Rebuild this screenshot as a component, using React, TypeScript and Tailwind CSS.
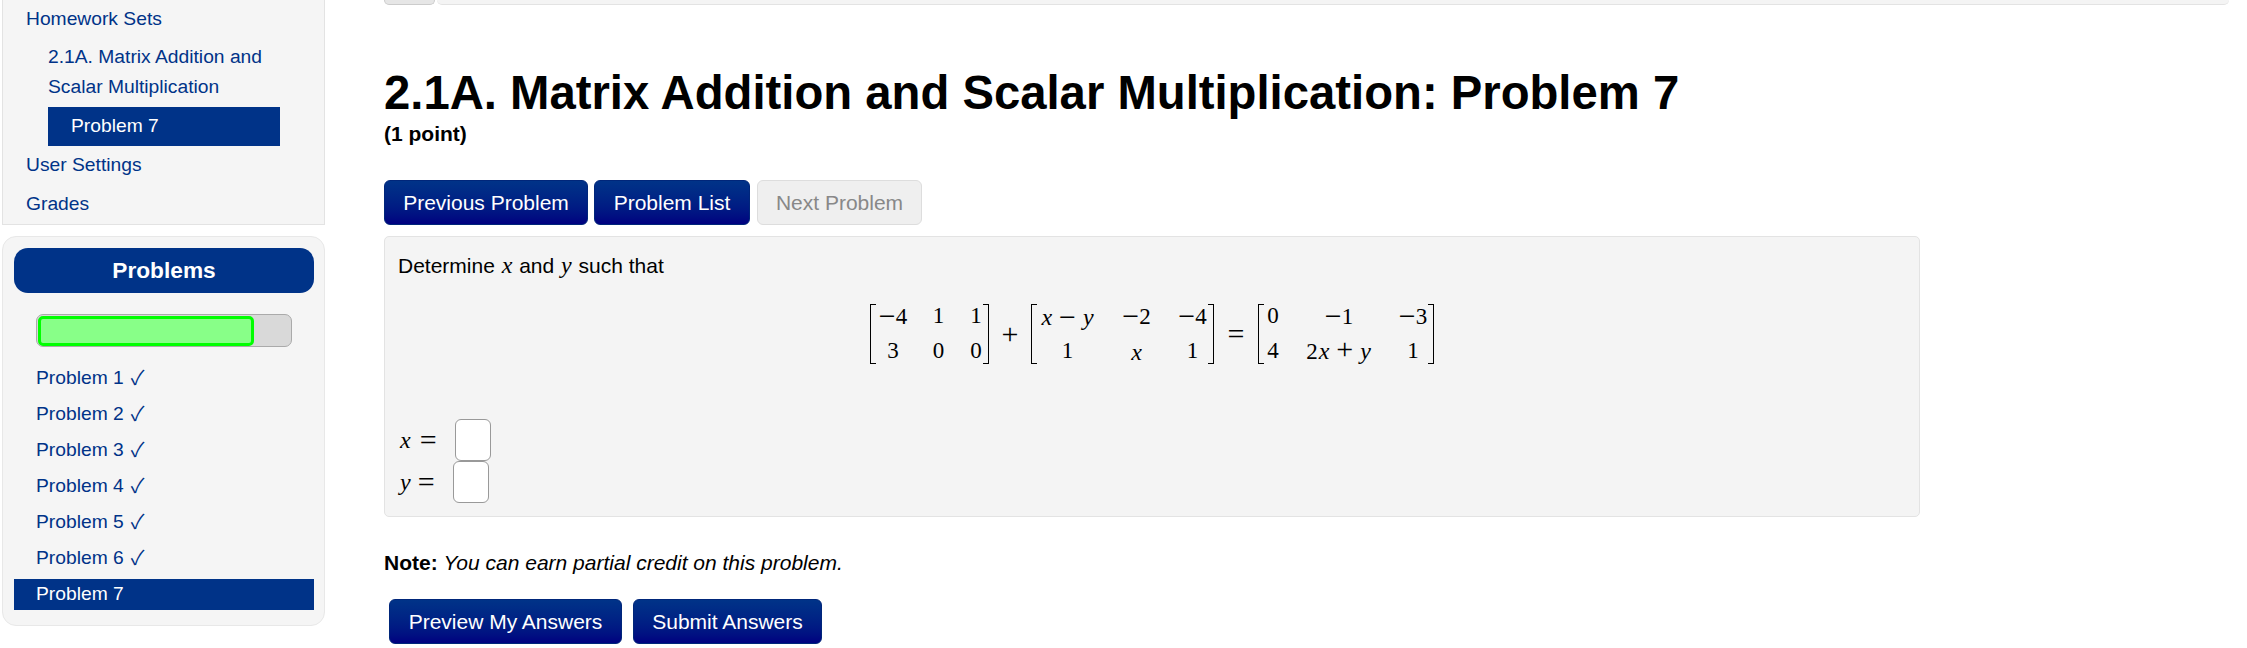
/** WeBWorK problem page: sidebar nav + problem body */

const blueBtn =
  "h-[45px] rounded-[6px] border border-[#00267a] bg-gradient-to-b from-[#003388] to-[#000080] text-[21px] text-white";

function Bracket({ side }: { side: "l" | "r" }) {
  return (
    <div
      className={
        side === "l"
          ? "h-[60px] w-[6px] shrink-0 border-y border-l-[1.5px] border-black"
          : "h-[60px] w-[6px] shrink-0 border-y border-r-[1.5px] border-black"
      }
    />
  );
}

function Matrix({ cols, cells, className }: { cols: string; cells: React.ReactNode[]; className: string }) {
  return (
    <div className={"flex items-center justify-between " + className}>
      <Bracket side="l" />
      <div className={"ml-[2px] grid auto-rows-[35px] items-center text-center " + cols}>
        {cells.map((cell, i) => (
          <div key={i} className="flex items-baseline justify-center whitespace-nowrap">
            {cell}
          </div>
        ))}
      </div>
      <Bracket side="r" />
    </div>
  );
}

function V({ children }: { children: React.ReactNode }) {
  return <i className="px-[1px] font-['Liberation_Serif',serif] text-[24px]">{children}</i>;
}

/** math operator, set larger than the digits to get the width of the reference's math font */
function Op({ children, className = "" }: { children: React.ReactNode; className?: string }) {
  return <span className={"font-['Liberation_Serif',serif] text-[30px] leading-none " + className}>{children}</span>;
}

function Minus({ className = "" }: { className?: string }) {
  return <Op className={"translate-y-[1.5px] " + className}>−</Op>;
}

export default function App() {
  const problems = [1, 2, 3, 4, 5, 6];

  return (
    <div className="flex h-[648px] w-[2247px] overflow-hidden bg-white font-['Liberation_Sans',Arial,sans-serif] text-[21px] text-black">
      {/* left column */}
      <aside className="ml-[2px] w-[323px] shrink-0 text-[19.25px]">
        <nav className="h-[225px] border-x border-b border-[#e3e3e3] bg-[#f5f5f5] text-[#003388]">
          <div className="flex h-[38px] items-center pl-[23px]">Homework Sets</div>
          <div className="ml-[45px] pt-[4px] leading-[30px]">
            2.1A. Matrix Addition and
            <br />
            Scalar Multiplication
          </div>
          <div className="ml-[45px] mt-[5px] flex h-[39px] w-[232px] items-center bg-[#003388] pl-[23px] text-white">
            Problem 7
          </div>
          <div className="flex h-[39px] items-center pl-[23px]">User Settings</div>
          <div className="flex h-[39px] items-center pl-[23px]">Grades</div>
        </nav>

        <section className="mt-[11px] h-[390px] rounded-[14px] border border-[#e8e8e8] bg-[#f5f5f5] px-[11px] pt-[11px] text-[#003388]">
          <h2 className="flex h-[45px] w-[300px] items-center justify-center rounded-[14px] bg-[#003388] text-[22.7px] font-bold text-white">
            Problems
          </h2>
          <div className="ml-[22px] mt-[21px] h-[33px] w-[256px] rounded-[7px] border border-[#aaaaaa] bg-[#d9d9d9] pl-px pt-px">
            <div className="h-[30px] w-[216px] rounded-[5px] border-[3px] border-[#00ff00] bg-[#88ff88]" />
          </div>
          <ul className="mt-[13px]">
            {problems.map((n) => (
              <li key={n} className="flex h-[36px] items-center gap-[7px] whitespace-pre pl-[22px]">
                Problem {n}
                <span className="mb-[3px] font-['Noto_Sans_CJK_SC',sans-serif] text-[20px] leading-none">✓</span>
              </li>
            ))}
            <li className="mt-[3px] flex h-[31px] w-[300px] items-center bg-[#003388] pl-[22px] text-white">
              Problem 7
            </li>
          </ul>
        </section>
      </aside>

      {/* main column */}
      <main className="ml-[59px] w-[1845px]">
        <div className="flex gap-[2px]">
          <div className="h-[5px] w-[51px] rounded-b-[5px] border border-t-0 border-[#cccccc] bg-[#e6e6e6]" />
          <div className="h-[5px] w-[1792px] rounded-b-[7px] border-b border-[#e3e3e3] bg-[#f4f4f4]" />
        </div>

        <h1 className="mt-[60px] whitespace-nowrap text-[47.25px] font-bold leading-[56px]">
          2.1A. Matrix Addition and Scalar Multiplication: Problem 7
        </h1>
        <p className="mt-[1px] font-bold leading-[24px]">(1 point)</p>

        <div className="mt-[34px] flex gap-[6px]">
          <button className={blueBtn + " w-[204px]"}>Previous Problem</button>
          <button className={blueBtn + " w-[156px]"}>Problem List</button>
          <button className="ml-[1px] h-[45px] w-[165px] rounded-[6px] border border-[#dddddd] bg-[#efefef] text-[21px] text-[#888888]">
            Next Problem
          </button>
        </div>

        <div className="mt-[11px] h-[281px] w-[1536px] rounded-[5px] border border-[#e3e3e3] bg-[#f4f4f4]">
          <p className="ml-[13px] mt-[15px] leading-[27px]">
            Determine <V>x</V> and <V>y</V> such that
          </p>

          <div className="mt-[20px] flex h-[70px] items-center justify-center font-['Liberation_Serif',serif] text-[23px]">
            <Matrix
              className="w-[119px]"
              cols="grid-cols-[30px_14px_14px] gap-x-[23.5px]"
              cells={[
                <>
                  <Minus />4
                </>,
                "1",
                "1",
                "3",
                "0",
                "0",
              ]}
            />
            <Op className="w-[42px] text-center">+</Op>
            <Matrix
              className="w-[183px]"
              cols="grid-cols-[56px_30px_30px] gap-x-[26px]"
              cells={[
                <>
                  <V>x</V>
                  <Minus className="mx-[6px]" />
                  <V>y</V>
                </>,
                <>
                  <Minus />2
                </>,
                <>
                  <Minus />4
                </>,
                "1",
                <V>x</V>,
                "1",
              ]}
            />
            <Op className="w-[44px] text-center">=</Op>
            <Matrix
              className="w-[176px]"
              cols="grid-cols-[14px_68px_30px] gap-x-[25px]"
              cells={[
                "0",
                <>
                  <Minus />1
                </>,
                <>
                  <Minus />3
                </>,
                "4",
                <>
                  2<V>x</V>
                  <Op className="mx-[6px]">+</Op>
                  <V>y</V>
                </>,
                "1",
              ]}
            />
          </div>

          <div className="ml-[14px] mt-[50px] font-['Liberation_Serif',serif] text-[23px]">
            <div className="flex h-[42px] items-center">
              <V>x</V>
              <Op className="ml-[8px]">=</Op>
              <input className="ml-[18px] h-[42px] w-[36px] rounded-[6px] border border-[#999999] bg-white" />
            </div>
            <div className="flex h-[42px] items-center">
              <V>y</V>
              <Op className="ml-[6px]">=</Op>
              <input className="ml-[18px] h-[42px] w-[36px] rounded-[6px] border border-[#999999] bg-white" />
            </div>
          </div>
        </div>

        <p className="mt-[32px] leading-[27px]">
          <b>Note:</b> <i>You can earn partial credit on this problem.</i>
        </p>

        <div className="ml-[5px] mt-[23px] flex gap-[11px]">
          <button className={blueBtn + " w-[233px]"}>Preview My Answers</button>
          <button className={blueBtn + " w-[189px]"}>Submit Answers</button>
        </div>
      </main>
    </div>
  );
}
